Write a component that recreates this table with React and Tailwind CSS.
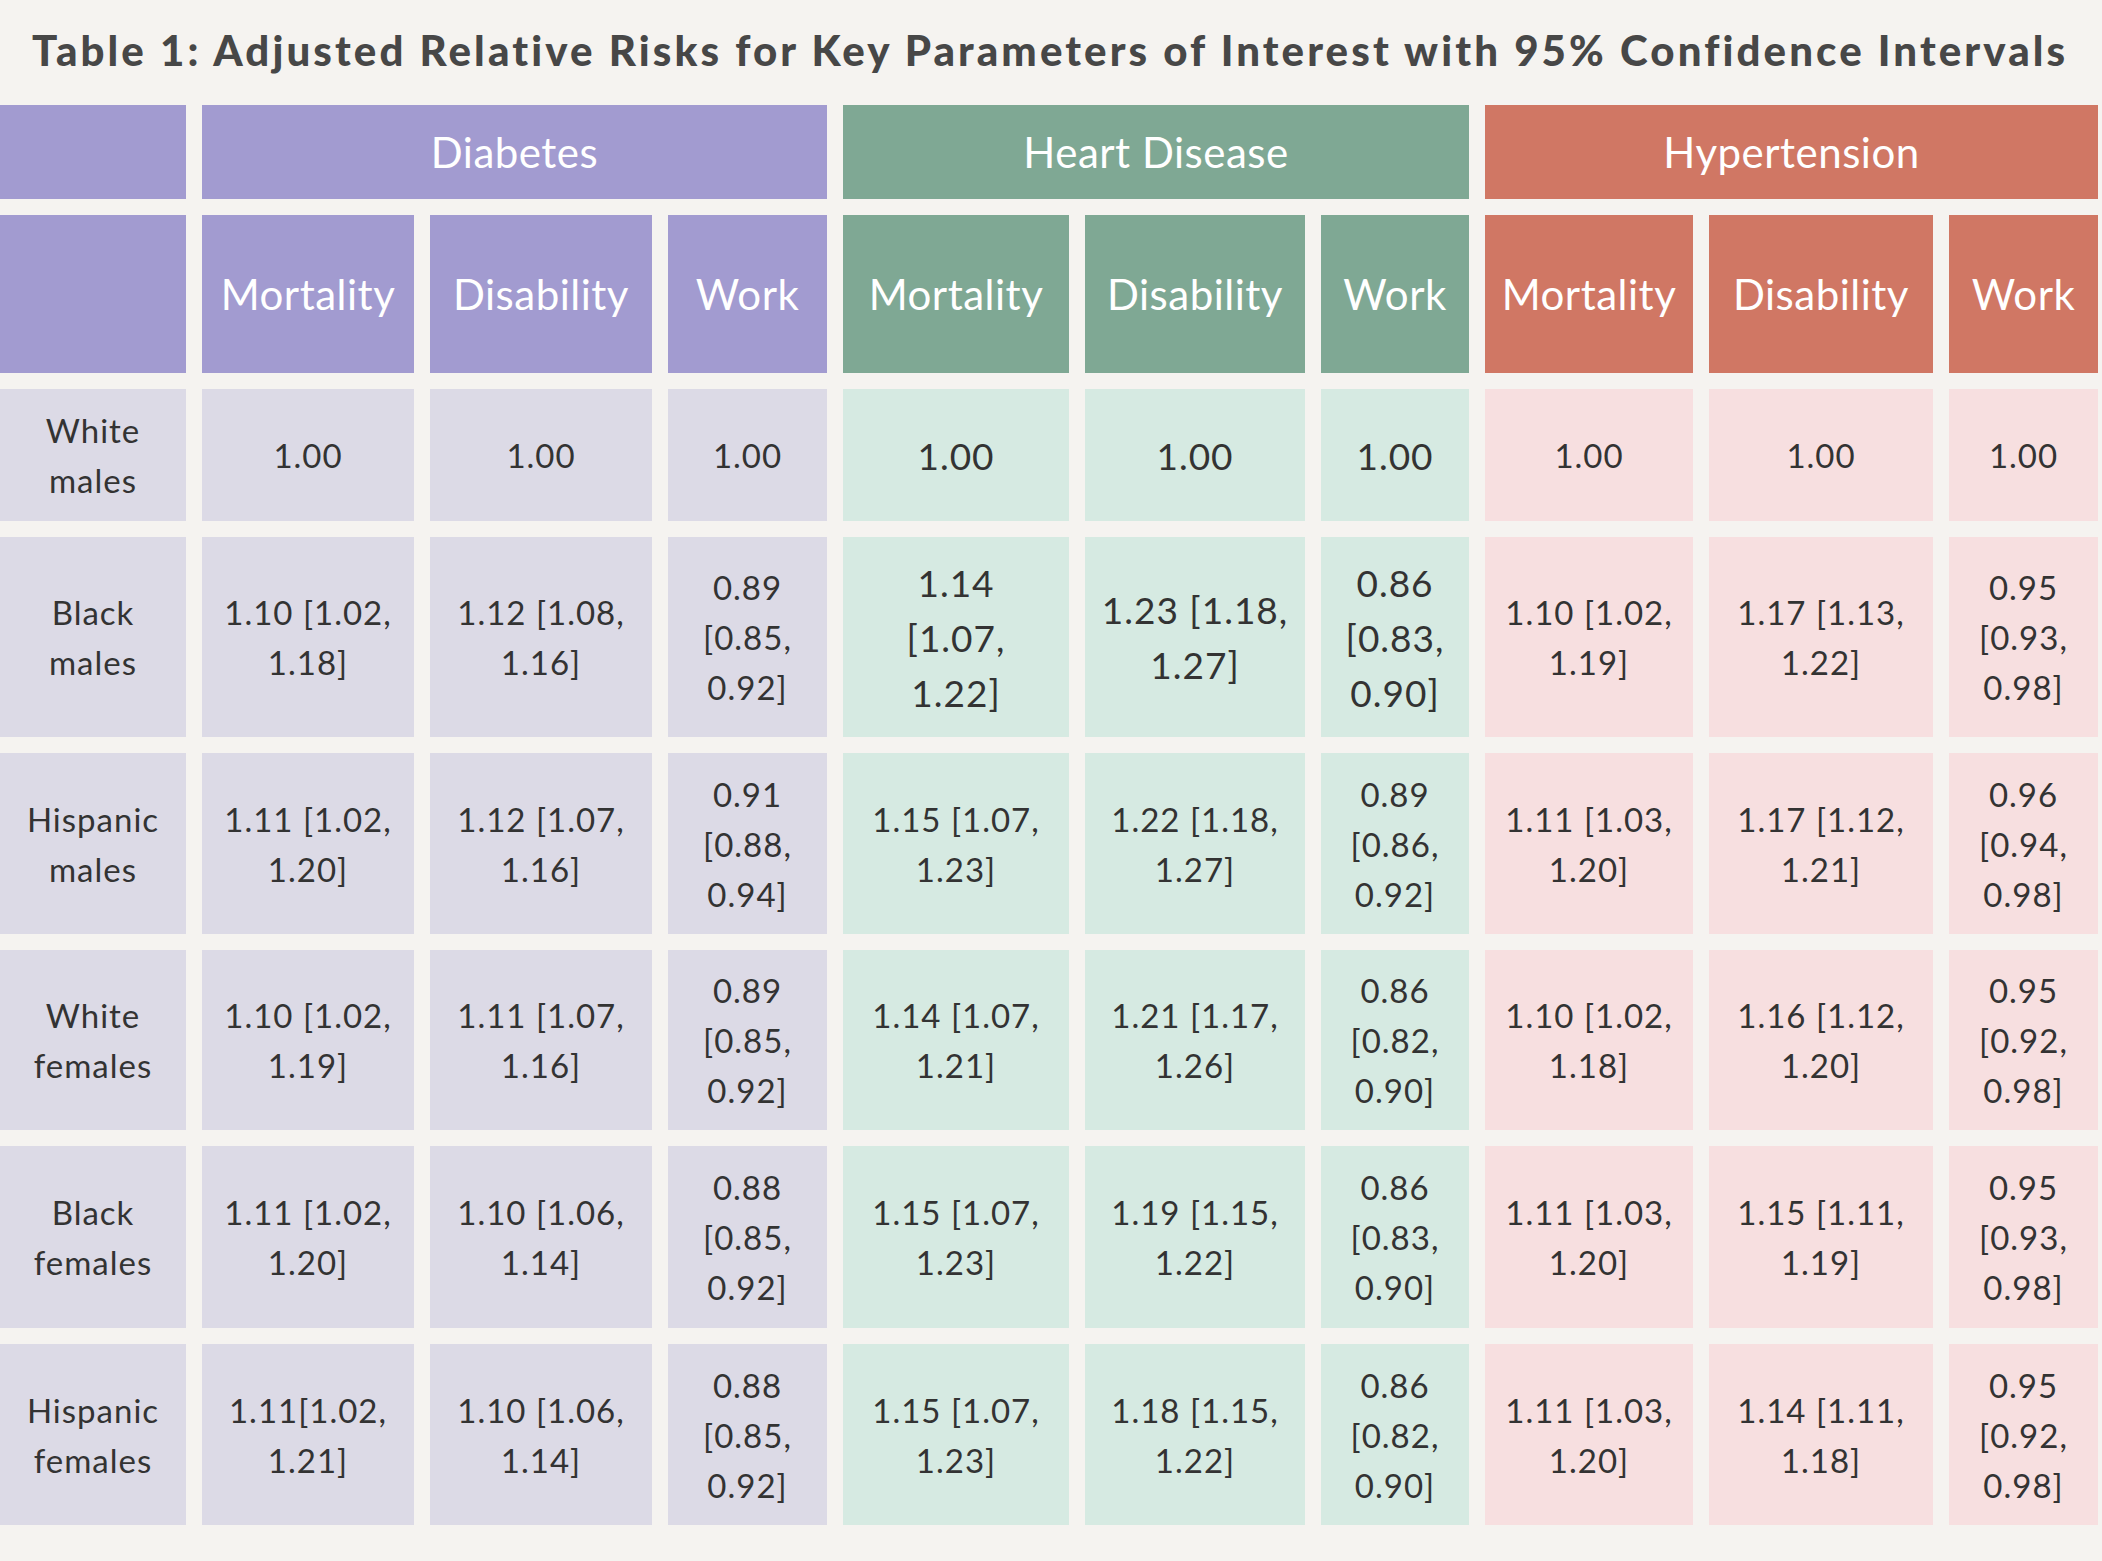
import React from 'react';

// column groups: label + 3 diseases x 3 outcomes
const GROUPS = [
  { name: 'Diabetes', head: 'bg-[#a29bd0]', cell: 'bg-[#dcdae6]' },
  { name: 'Heart Disease', head: 'bg-[#7fa894]', cell: 'bg-[#d6eae2]' },
  { name: 'Hypertension', head: 'bg-[#d07764]', cell: 'bg-[#f7dfe0]' },
];

const OUTCOMES = ['Mortality', 'Disability', 'Work'];

// each cell is a list of lines; a trailing true marks the larger type in the heart disease column
const ROWS = [
  {
    label: ['White', 'males'],
    cells: [
      [['1.00'], ['1.00'], ['1.00']],
      [['1.00'], ['1.00'], ['1.00'], true],
      [['1.00'], ['1.00'], ['1.00']],
    ],
  },
  {
    label: ['Black', 'males'],
    cells: [
      [['1.10 [1.02,', '1.18]'], ['1.12 [1.08,', '1.16]'], ['0.89', '[0.85,', '0.92]']],
      [['1.14', '[1.07,', '1.22]'], ['1.23 [1.18,', '1.27]'], ['0.86', '[0.83,', '0.90]'], true],
      [['1.10 [1.02,', '1.19]'], ['1.17 [1.13,', '1.22]'], ['0.95', '[0.93,', '0.98]']],
    ],
  },
  {
    label: ['Hispanic', 'males'],
    cells: [
      [['1.11 [1.02,', '1.20]'], ['1.12 [1.07,', '1.16]'], ['0.91', '[0.88,', '0.94]']],
      [['1.15 [1.07,', '1.23]'], ['1.22 [1.18,', '1.27]'], ['0.89', '[0.86,', '0.92]']],
      [['1.11 [1.03,', '1.20]'], ['1.17 [1.12,', '1.21]'], ['0.96', '[0.94,', '0.98]']],
    ],
  },
  {
    label: ['White', 'females'],
    cells: [
      [['1.10 [1.02,', '1.19]'], ['1.11 [1.07,', '1.16]'], ['0.89', '[0.85,', '0.92]']],
      [['1.14 [1.07,', '1.21]'], ['1.21 [1.17,', '1.26]'], ['0.86', '[0.82,', '0.90]']],
      [['1.10 [1.02,', '1.18]'], ['1.16 [1.12,', '1.20]'], ['0.95', '[0.92,', '0.98]']],
    ],
  },
  {
    label: ['Black', 'females'],
    cells: [
      [['1.11 [1.02,', '1.20]'], ['1.10 [1.06,', '1.14]'], ['0.88', '[0.85,', '0.92]']],
      [['1.15 [1.07,', '1.23]'], ['1.19 [1.15,', '1.22]'], ['0.86', '[0.83,', '0.90]']],
      [['1.11 [1.03,', '1.20]'], ['1.15 [1.11,', '1.19]'], ['0.95', '[0.93,', '0.98]']],
    ],
  },
  {
    label: ['Hispanic', 'females'],
    cells: [
      [['1.11[1.02,', '1.21]'], ['1.10 [1.06,', '1.14]'], ['0.88', '[0.85,', '0.92]']],
      [['1.15 [1.07,', '1.23]'], ['1.18 [1.15,', '1.22]'], ['0.86', '[0.82,', '0.90]']],
      [['1.11 [1.03,', '1.20]'], ['1.14 [1.11,', '1.18]'], ['0.95', '[0.92,', '0.98]']],
    ],
  },
];

function Lines({ lines, big }) {
  return (
    <div
      className={
        big
          ? 'text-[37px] leading-[55px] tracking-[1px]'
          : 'text-[33px] leading-[50px] tracking-[1px]'
      }
    >
      {lines.map((l, i) => (
        <div key={i} className="whitespace-nowrap">{l}</div>
      ))}
    </div>
  );
}

export default function App() {
  return (
    <div className="w-[2102px] h-[1561px] bg-[#f5f3f0] font-['Lato','Noto_Sans',sans-serif] overflow-hidden">
      <div className="h-[105px] flex items-center pl-[32px] pb-[4px]">
        <h1 className="text-[42px] font-black text-[#474747] tracking-[3.1px] whitespace-nowrap">
          Table 1: Adjusted Relative Risks for Key Parameters of Interest with 95% Confidence Intervals
        </h1>
      </div>

      <div className="grid grid-cols-[186px_212px_222px_159px_226px_220px_148px_208px_224px_149px] grid-rows-[94px_158px_132px_200px_181px_180px_182px_181px] gap-x-[16px] gap-y-[16px]">
        {/* group header */}
        <div className="bg-[#a29bd0]" />
        {GROUPS.map((g) => (
          <div key={g.name} className={`${g.head} col-span-3 flex items-center justify-center text-white text-[42px] tracking-[0.5px]`}>
            {g.name}
          </div>
        ))}

        {/* outcome header */}
        <div className="bg-[#a29bd0]" />
        {GROUPS.map((g) =>
          OUTCOMES.map((o) => (
            <div key={g.name + o} className={`${g.head} flex items-center justify-center text-white text-[42px] tracking-[0.5px] whitespace-nowrap`}>
              {o}
            </div>
          ))
        )}

        {/* data rows */}
        {ROWS.map((r) => (
          <React.Fragment key={r.label.join(' ')}>
            <div className="bg-[#dcdae6] flex items-center justify-center text-center text-[#333]">
              <Lines lines={r.label} />
            </div>
            {r.cells.map((grp, gi) => {
              const big = grp[3] === true;
              return grp.slice(0, 3).map((lines, ci) => (
                <div
                  key={gi + '-' + ci}
                  className={`${GROUPS[gi].cell} flex items-center justify-center text-center text-[#333]`}
                >
                  <Lines lines={lines} big={big} />
                </div>
              ));
            })}
          </React.Fragment>
        ))}
      </div>
    </div>
  );
}
